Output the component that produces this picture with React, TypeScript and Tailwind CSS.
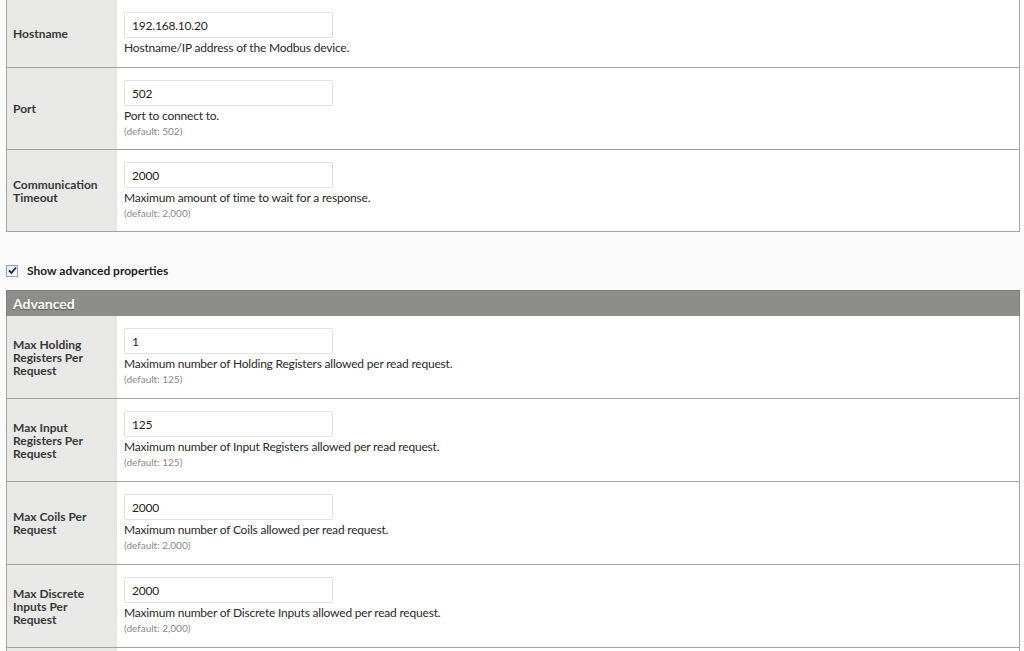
import React from "react"

type Field = {
  label: string
  value: string
  help: string
  def?: string
}

const basicFields: Field[] = [
  {
    label: "Hostname",
    value: "192.168.10.20",
    help: "Hostname/IP address of the Modbus device.",
  },
  {
    label: "Port",
    value: "502",
    help: "Port to connect to.",
    def: "(default: 502)",
  },
  {
    label: "Communication Timeout",
    value: "2000",
    help: "Maximum amount of time to wait for a response.",
    def: "(default: 2,000)",
  },
]

const advancedFields: Field[] = [
  {
    label: "Max Holding Registers Per Request",
    value: "1",
    help: "Maximum number of Holding Registers allowed per read request.",
    def: "(default: 125)",
  },
  {
    label: "Max Input Registers Per Request",
    value: "125",
    help: "Maximum number of Input Registers allowed per read request.",
    def: "(default: 125)",
  },
  {
    label: "Max Coils Per Request",
    value: "2000",
    help: "Maximum number of Coils allowed per read request.",
    def: "(default: 2,000)",
  },
  {
    label: "Max Discrete Inputs Per Request",
    value: "2000",
    help: "Maximum number of Discrete Inputs allowed per read request.",
    def: "(default: 2,000)",
  },
  {
    label: "Max Multiple Registers Per Request",
    value: "123",
    help: "Maximum number of registers allowed per write request.",
    def: "(default: 123)",
  },
]

const FieldRow = ({ field, tall }: { field: Field; tall?: boolean }) => {
  let pad = "pb-[12px]"
  if (field.def) pad = tall ? "pb-[11px]" : "pb-[10px]"

  return (
    <div className="flex border-b border-[#a3a3a3]">
      <div className="flex w-[110px] shrink-0 items-center bg-[#e8e8e6] px-[6px] text-[12px] font-bold leading-[13px] text-[#383838]">
        <span className="w-[92px]">{field.label}</span>
      </div>
      <div className={`flex-1 bg-white pl-[7px] pt-[12px] ${pad}`}>
        <input
          className="block h-[26px] w-[209px] rounded-[2px] border border-[#e2e2e2] bg-white px-[7px] text-[12px] tracking-[-0.2px] text-[#1e1e1e] outline-none"
          defaultValue={field.value}
        />
        <div className="mt-[2px] h-[15px] text-[12px] leading-[16px] tracking-[-0.2px] text-[#2a2a2a]">
          {field.help}
        </div>
        {field.def && (
          <div className="h-[16px] text-[10px] leading-[16px] text-[#8a8a8a]">
            {field.def}
          </div>
        )}
      </div>
    </div>
  )
}

const CheckMark = () => (
  <span className="flex h-[12px] w-[12px] items-center justify-center border border-[#8f9fb8] bg-gradient-to-br from-[#dfe6f0] to-[#f7f9fc]">
    <svg width="9" height="9" viewBox="0 0 9 9">
      <path
        d="M1 4.5 L3.5 7 L8 1.5"
        fill="none"
        stroke="#1f2a36"
        strokeWidth="1.8"
      />
    </svg>
  </span>
)

const App = () => {
  return (
    <div
      className="min-h-[651px] overflow-hidden bg-[#fbfbfb] pl-[6px] pr-[4px]"
      style={{ fontFamily: "Lato, 'Open Sans', sans-serif" }}
    >
      <div className="-mt-px border-x border-t border-[#a3a3a3]">
        {basicFields.map((f) => (
          <FieldRow key={f.label} field={f} />
        ))}
      </div>

      <label className="mt-[32px] flex h-[13px] items-center gap-[9px] text-[12px] font-bold text-[#222]">
        <input type="checkbox" defaultChecked className="hidden" />
        <CheckMark />
        Show advanced properties
      </label>

      <div className="mt-[13px] border-x border-t border-[#7e7f7b]">
        <div className="flex h-[26px] items-center border-b border-[#7e7f7b] bg-[#8d8e8a] px-[6px] text-[14px] font-bold text-white [text-shadow:0_1px_1px_rgba(0,0,0,0.4)]">
          Advanced
        </div>
        <div className="-mx-px -mt-px border-x border-[#a3a3a3]">
          {advancedFields.map((f) => (
            <FieldRow key={f.label} field={f} tall />
          ))}
        </div>
      </div>
    </div>
  )
}

export default App
